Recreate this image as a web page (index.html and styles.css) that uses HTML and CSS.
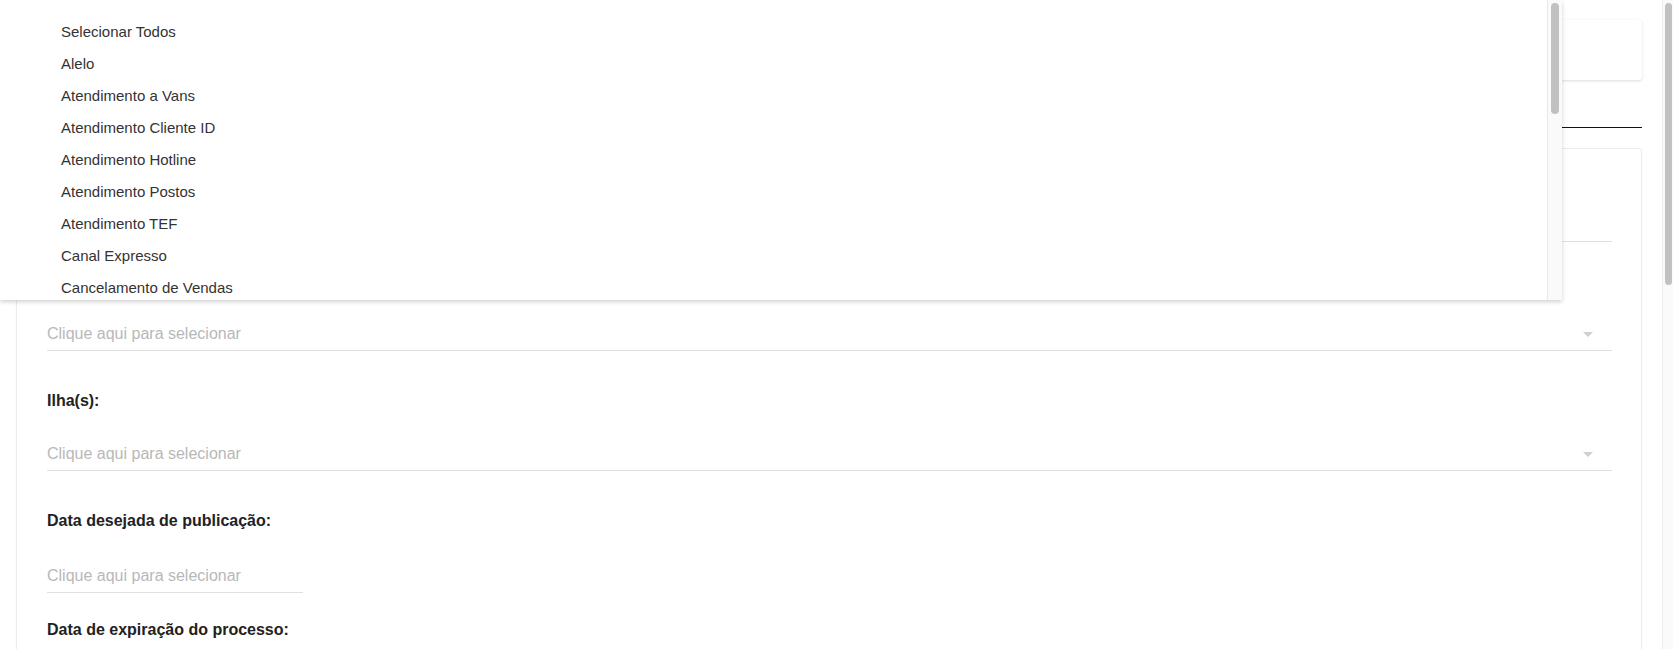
FILE: index.html
```html
<!DOCTYPE html>
<html lang="pt">
<head>
<meta charset="utf-8">
<title>Formulário</title>
<link rel="stylesheet" href="styles.css">
</head>
<body>
<div class="app">
  <div class="page">
    <div class="topcard"></div>
    <div class="rule"></div>
    <div class="card">
      <div class="group group-first">
        <div class="label"></div>
        <div class="field"><span class="ph"></span></div>
      </div>
      <div class="group">
        <div class="label"></div>
        <div class="field"><span class="ph">Clique aqui para selecionar</span><span class="caret"></span></div>
      </div>
      <div class="group">
        <div class="label">Ilha(s):</div>
        <div class="field"><span class="ph">Clique aqui para selecionar</span><span class="caret"></span></div>
      </div>
      <div class="group group-date">
        <div class="label">Data desejada de publicação:</div>
        <div class="field field-date"><span class="ph">Clique aqui para selecionar</span></div>
      </div>
      <div class="group">
        <div class="label">Data de expiração do processo:</div>
      </div>
    </div>
  </div>
  <div class="vscroll"><div class="vthumb"></div></div>

  <div class="dropdown">
    <ul class="options">
      <li>Selecionar Todos</li>
      <li>Alelo</li>
      <li>Atendimento a Vans</li>
      <li>Atendimento Cliente ID</li>
      <li>Atendimento Hotline</li>
      <li>Atendimento Postos</li>
      <li>Atendimento TEF</li>
      <li>Canal Expresso</li>
      <li>Cancelamento de Vendas</li>
    </ul>
    <div class="dscroll"><div class="dthumb"></div></div>
  </div>
</div>
</body>
</html>
```
FILE: styles.css
```css
html, body {
  margin: 0;
  padding: 0;
  background: #fff;
  font-family: "Liberation Sans", Arial, Helvetica, sans-serif;
}

.app {
  position: relative;
  display: flex;
  height: 649px;
  overflow: hidden;
}

.page {
  flex: 1;
  padding: 20px 20px 0 16px;
  min-width: 0;
}

.topcard {
  height: 60px;
  background: #fff;
  border-radius: 3px;
  box-shadow: 0 1px 3px rgba(0, 0, 0, 0.14);
}

.rule {
  height: 1px;
  background: #111;
  margin-top: 47px;
}

.card {
  margin-top: 20px;
  height: 700px;
  background: #fff;
  border: 1px solid #ececec;
  border-radius: 3px;
  box-shadow: 0 1px 2px rgba(0, 0, 0, 0.06);
  padding: 13px 29px 0 30px;
}

.group {
  margin-bottom: 40px;
}

.group-first {
  margin-bottom: 29px;
}

.group-date {
  margin-bottom: 27px;
}

.label {
  height: 20px;
  font-size: 16px;
  line-height: 20px;
  font-weight: bold;
  color: #222;
}

.field {
  margin-top: 19px;
  display: flex;
  align-items: center;
  height: 20px;
  padding: 14px 0 6px;
  border-bottom: 1px solid #e0e0e0;
}

.group-date .field {
  margin-top: 21px;
}

.field-date {
  width: 256px;
}

.ph {
  flex: 1;
  font-size: 16px;
  line-height: 20px;
  color: #b8b8b8;
}

.caret {
  width: 0;
  height: 0;
  border-left: 5px solid transparent;
  border-right: 5px solid transparent;
  border-top: 5px solid #d0d0d0;
  margin-right: 19px;
}

.vscroll {
  width: 10px;
  background: #fafafa;
  border-left: 1px solid #ececec;
  padding-top: 3px;
  display: flex;
  justify-content: center;
}

.vthumb {
  width: 7px;
  height: 282px;
  border-radius: 4px;
  background: #c1c1c1;
}

.dropdown {
  position: absolute;
  top: 0;
  left: 0;
  width: 1562px;
  height: 300px;
  background: #fff;
  box-shadow: 0 2px 4px rgba(0, 0, 0, 0.18);
  display: flex;
  z-index: 10;
}

.options {
  flex: 1;
  list-style: none;
  margin: 0;
  padding: 16px 0 0 0;
  overflow: hidden;
}

.options li {
  height: 32px;
  line-height: 32px;
  padding-left: 61px;
  font-size: 15px;
  color: #333;
}

.dscroll {
  width: 14px;
  background: #fafafa;
  border-left: 1px solid #e8e8e8;
  padding-top: 3px;
  display: flex;
  justify-content: center;
}

.dthumb {
  width: 8px;
  height: 111px;
  border-radius: 4px;
  background: #c1c1c1;
}
```
